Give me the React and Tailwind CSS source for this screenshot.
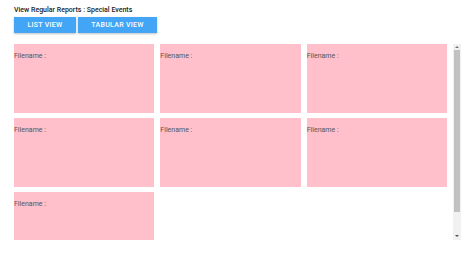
const cards = Array.from({ length: 7 });

export default function App() {
    return (
        <div className="w-[474px] h-[266px] bg-white pl-[14px] pt-[5px] font-['Roboto',sans-serif] overflow-hidden">
            {/* Heading */}
            <div className="text-[7px] leading-[10px] font-medium text-[#222]">
                View Regular Reports : Special Events
            </div>

            {/* View buttons */}
            <div className="flex gap-[2px] mt-[2px]">
                <button className="w-[62px] h-[16px] bg-[#42a5f5] text-white text-[7px] font-medium tracking-[0.3px] uppercase shadow-[0_1px_2px_rgba(0,0,0,0.25)]">
                    List View
                </button>
                <button className="w-[79px] h-[16px] bg-[#42a5f5] text-white text-[7px] font-medium tracking-[0.3px] uppercase shadow-[0_1px_2px_rgba(0,0,0,0.25)]">
                    Tabular View
                </button>
            </div>

            {/* Report cards */}
            <div className="flex mt-[11px] h-[196px]">
                <div className="w-[433px] h-full overflow-hidden grid grid-cols-3 auto-rows-[69px] gap-x-[6px] gap-y-[5px]">
                    {cards.map((_, i) => (
                        <div key={i} className="bg-[#ffc0cb] pt-[7px] text-[7px] leading-[10px] text-[#555]">
                            Filename :
                        </div>
                    ))}
                </div>

                {/* Scrollbar */}
                <div className="ml-[6px] w-[8px] h-full bg-[#f1f1f1] flex flex-col items-center">
                    <div className="h-[6px] flex items-center justify-center">
                        <div className="w-0 h-0 border-l-[2px] border-r-[2px] border-b-[2px] border-l-transparent border-r-transparent border-b-[#777]" />
                    </div>
                    <div className="w-[6px] h-[162px] bg-[#c1c1c1]" />
                    <div className="flex-1" />
                    <div className="h-[6px] mb-[1px] flex items-center justify-center">
                        <div className="w-0 h-0 border-l-[2px] border-r-[2px] border-t-[2px] border-l-transparent border-r-transparent border-t-[#555]" />
                    </div>
                </div>
            </div>
        </div>
    );
}
